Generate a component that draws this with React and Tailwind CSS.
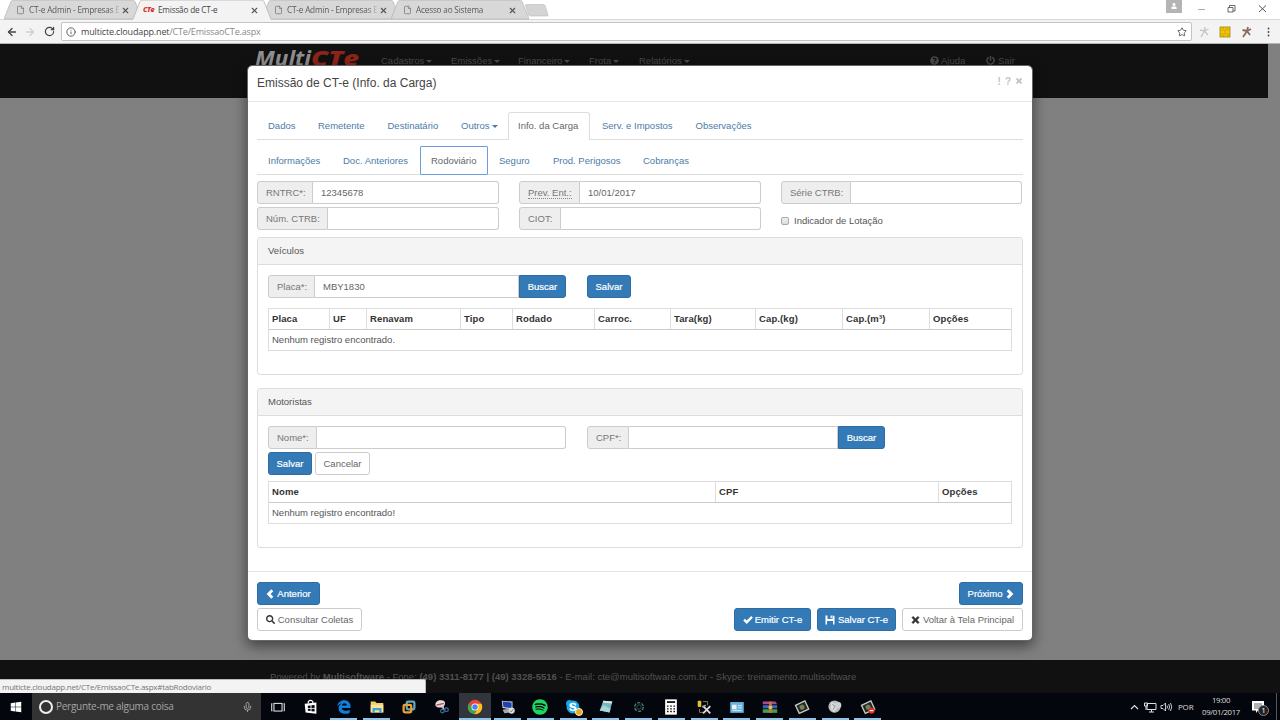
import React from "react";
import {
  FaPowerOff,
  FaQuestionCircle,
  FaSearch,
  FaSkype,
  FaSpotify,
  FaTimes,
  FaUser,
  FaWindows,
} from "react-icons/fa";
import { ArrowLeft, ArrowRight, RotateCw, Info, Star, Mic, X, File } from "lucide-react";

const browserTabs = [
  { title: "CT-e Admin - Empresas E", width: "w-[129px]" },
  { title: "Emissão de CT-e", width: "w-[129px]", active: true },
  { title: "CT-e Admin - Empresas E", width: "w-[129px]" },
  { title: "Acesso ao Sistema", width: "w-[130px]" },
];

const menus = [
  { label: "Cadastros", width: "w-[70px]" },
  { label: "Emissões", width: "w-[67px]" },
  { label: "Financeiro", width: "w-[71px]" },
  { label: "Frota", width: "w-[50px]" },
  { label: "Relatórios", width: "w-[70px]" },
];

const mainTabs = [
  { label: "Dados", width: "w-[50px]" },
  { label: "Remetente", width: "w-[69.500px]" },
  { label: "Destinatário", width: "w-[73.500px]" },
  { label: "Outros", width: "w-[58px]", caret: true },
  { label: "Info. da Carga", width: "w-[82px]", active: true },
  { label: "Serv. e Impostos", width: "w-[93.500px]" },
  { label: "Observações", width: "w-[80px]" },
];

const subTabs = [
  { label: "Informações", width: "w-[75px]" },
  { label: "Doc. Anteriores", width: "w-[88px]" },
  { label: "Rodoviário", width: "w-[68px]", focused: true },
  { label: "Seguro", width: "w-[54px]" },
  { label: "Prod. Perigosos", width: "w-[90px]" },
  { label: "Cobranças", width: "w-[70px]" },
];

const vehicleColumns = ["Placa", "UF", "Renavam", "Tipo", "Rodado", "Carroc.", "Tara(kg)", "Cap.(kg)", "Cap.(m³)", "Opções"];
const driverColumns = ["Nome", "CPF", "Opções"];

function Caret() {
  return (
    <span className="ml-[2px] inline-block h-0 w-0 border-x-[3px] border-t-[3px] border-x-transparent border-t-current align-middle" />
  );
}

function BrowserTab({ title, width, active }) {
  return (
    <div className={`relative h-[19px] ${width} ${active ? "z-10" : ""}`}>
      <svg className="absolute top-0 -left-1 h-[20px] w-[138px]" viewBox="0 0 138 20">
        <path d="M0 20 L7 1.5 Q8 0 10 0 H128 Q130 0 131 1.5 L138 20 Z" fill={active ? "#f3f3f3" : "#d8d8d8"} />
        <path
          d={active ? "M0 19 L7 1.5 Q8 0 10 0 H128 Q130 0 131 1.5 L138 19" : "M0 19 L7 1.5 Q8 0 10 0 H128 Q130 0 131 1.5 L138 19 H0"}
          fill="none"
          stroke="#b5b5b5"
          strokeWidth="0.8"
        />
      </svg>
      <div className="relative flex h-full items-center pt-px pl-[8px] text-[8.2px] tracking-[-0.18px] text-[#5a5a5a]">
        {active ? (
          <span className="-ml-[2px] w-[15px] text-[7px] font-extrabold tracking-[-0.4px] text-[#d8332a] italic">CTe</span>
        ) : (
          <span className="w-[13px]">
            <File className="h-[10px] w-[9px] text-[#777]" strokeWidth={2} />
          </span>
        )}
        <span className={`w-[92px] overflow-hidden whitespace-nowrap ${active ? "text-[#444]" : "[mask-image:linear-gradient(to_right,#000_80px,transparent_92px)]"}`}>
          {title}
        </span>
        <X className="h-[9px] w-[9px] shrink-0 text-[#555]" strokeWidth={3} />
      </div>
    </div>
  );
}

function BrowserChrome() {
  return (
    <header className="h-[44px] bg-white font-['Open_Sans','Noto_Sans',sans-serif]">
      <div className="flex h-[19px] pl-[8px]">
        {browserTabs.map((tab, i) => (
          <BrowserTab key={i} {...tab} />
        ))}
        <svg className="mt-[4px] h-[13px] w-[24px]" viewBox="0 0 24 13">
          <path d="M0.5 1.5 Q0 .5 1.5 .5 H18 Q19.500 .5 20 1.500 L23 11 Q23.500 12 22 12 H5 Q4 12 3.500 11 Z" fill="#d4d4d4" stroke="#bbb" strokeWidth="0.6" />
        </svg>
        <div className="ml-auto flex h-full text-[#444]">
          <span className="flex h-[13px] w-[16px] items-center justify-center bg-[#b4b4b4] text-white">
            <FaUser className="mb-[2px] h-[6px] w-[6px]" />
          </span>
          <svg className="mr-[-1px] ml-[15px] h-[18px] w-[84px]" viewBox="0 0 84 18" fill="none" stroke="currentColor">
            <path d="M1 9.500 H8" stroke="#aaa" />
            <path d="M31 7.500 H36 V12 H31 Z M32.500 7 V5.500 H38 V11 H36" strokeWidth="0.8" />
            <path d="M62 5.500 L69 12 M69 5.500 L62 12" strokeWidth="0.9" />
          </svg>
        </div>
      </div>
      <div className="flex h-[25px] items-center border-t border-b border-t-[#dadada] border-b-[#b5b5b5] bg-[#f3f3f3]">
        <ArrowLeft className="ml-[6px] h-[12px] w-[12px] text-[#444]" strokeWidth={2.6} />
        <ArrowRight className="ml-[6px] h-[12px] w-[12px] text-[#cfcfcf]" strokeWidth={2.6} />
        <RotateCw className="ml-[8px] h-[11px] w-[11px] text-[#444]" strokeWidth={2.6} />
        <div className="ml-[6px] flex h-[19px] w-[1131px] items-center rounded-xs border border-[#c4c4c4] bg-white px-[4px] text-[9px] tracking-[-0.16px] text-[#444]">
          <Info className="h-[10px] w-[10px] text-[#555]" strokeWidth={2.2} />
          <span className="ml-[5px]">
            multicte.cloudapp.net<span className="text-[#888]">/CTe/EmissaoCTe.aspx</span>
          </span>
          <Star className="ml-auto h-[10px] w-[10px] text-[#555]" strokeWidth={2.2} />
        </div>
        <svg className="ml-[7px] h-[12px] w-[76px]" viewBox="0 0 76 12">
          <path d="M6 1 L5.500 5 L9.500 3 M5.500 5 L9 9 M5.500 5 L2 11 M5.500 5 L1 4" fill="none" stroke="#c4c4c4" strokeWidth="1.300" />
          <rect x="21" y="1" width="10" height="10" fill="#f3c500" stroke="#9b8420" strokeWidth="0.8" />
          <path d="M21 4 H31 M21 8 H31 M24 1 V4 M28 1 V4 M26 4 V8 M24 8 V11 M29 8 V11" stroke="#c09d10" strokeWidth="0.6" />
          <path d="M49 1 L48 5 L52 3 M48 5 L51 9 M48 5 L44 11 M48 5 L43.500 4" fill="none" stroke="#8d6a5c" strokeWidth="1.800" />
          <circle cx="69.500" cy="2.500" r="0.9" fill="#444" />
          <circle cx="69.500" cy="6" r="0.9" fill="#444" />
          <circle cx="69.500" cy="9.500" r="0.9" fill="#444" />
        </svg>
      </div>
    </header>
  );
}

function Navbar() {
  return (
    <nav className="flex h-[54px] w-[1268px] bg-[#111] pl-[255px] text-[9.5px] text-[#4a4a4a]">
      <svg className="h-[30px] w-[108px]" viewBox="0 0 108 30" fontFamily="Open Sans" fontWeight="800" fontStyle="italic" fontSize="21">
        <text x="0" y="22" textLength="56" lengthAdjust="spacingAndGlyphs" fill="#8f8f8f" fontWeight="700">Multi</text>
        <text x="56" y="22" textLength="48" lengthAdjust="spacingAndGlyphs" fill="#8e2419">CTe</text>
      </svg>
      <div className="ml-[18px] flex pt-[10px]">
        {menus.map((menu) => (
          <span key={menu.label} className={menu.width}>
            {menu.label}
            <Caret />
          </span>
        ))}
      </div>
      <div className="ml-auto flex pt-[10px]">
        <span className="flex w-[56px] items-start">
          <FaQuestionCircle className="mt-[2px] mr-[2px] h-[9px] w-[9px]" />
          Ajuda
        </span>
        <span className="flex w-[282px] items-start">
          <FaPowerOff className="mt-[2px] mr-[3px] h-[9px] w-[9px]" />
          Sair
        </span>
      </div>
    </nav>
  );
}

function Field({ label, value, className = "", labelWidth, button, dotted }) {
  return (
    <div className={`flex h-[23px] ${className}`}>
      <span className={`flex shrink-0 items-center rounded-l-[3px] border border-[#ccc] bg-[#eee] pt-px pl-[8px] whitespace-nowrap text-[#777] ${labelWidth}`}>
        {dotted ? <span className="border-b border-dotted border-[#888] leading-[10px]">{label}</span> : label}
      </span>
      <span className={`flex flex-1 items-center border border-l-0 border-[#ccc] bg-white pt-px pl-[8px] text-[#666] ${button ? "" : "rounded-r-[3px]"}`}>
        {value}
      </span>
      {button && <Button className="w-[47px] rounded-l-none">{button}</Button>}
    </div>
  );
}

function Button({ children, className = "", plain }) {
  const colors = plain
    ? "border-[#ccc] bg-white text-[#666]"
    : "border-[#2e6da4] bg-[#337ab7] text-white [-webkit-text-stroke:0.2px_white]";
  return (
    <button className={`flex h-[23px] shrink-0 items-center justify-center rounded-[3px] border pt-px whitespace-nowrap ${colors} ${className}`}>
      {children}
    </button>
  );
}

function Panel({ title, className, children }) {
  return (
    <section className={`rounded-[3px] border border-[#ddd] ${className}`}>
      <h2 className="flex h-[27px] items-center rounded-t-[3px] border-b border-[#ddd] bg-[#f4f4f4] pt-px pl-[10px] text-[#555]">{title}</h2>
      <div className="px-[10px] pt-[10px]">{children}</div>
    </section>
  );
}

function DataTable({ columns, grid, empty, className }) {
  return (
    <div className={`h-[43px] border border-[#ddd] ${className}`}>
      <div className={`grid h-[21px] border-b border-[#ccc] ${grid}`}>
        {columns.map((column, i) => (
          <span key={column} className={`flex items-center pl-[3px] font-bold tracking-[0.12px] text-[#333] ${i ? "border-l border-[#ddd]" : ""}`}>
            {column}
          </span>
        ))}
      </div>
      <div className="flex h-[20px] items-center pl-[3px] text-[#555]">{empty}</div>
    </div>
  );
}

function Chevron({ flip }) {
  return (
    <svg className={`h-[10px] w-[8px] ${flip ? "-scale-x-100" : ""}`} viewBox="0 0 8 10" fill="currentColor">
      <path d="M5.300 0.300 L7.300 2.300 L4.600 5 L7.300 7.700 L5.300 9.700 L0.600 5 Z" />
    </svg>
  );
}

function CheckIcon() {
  return (
    <svg className="h-[10px] w-[10px]" viewBox="0 0 10 10" fill="currentColor">
      <path d="M0.200 5.500 L2 3.700 L3.700 5.400 L8.200 1 L9.900 2.700 L3.700 8.900 Z" />
    </svg>
  );
}

function FloppyIcon() {
  return (
    <svg className="mb-px h-[10px] w-[10px]" viewBox="0 0 10 10" fill="currentColor">
      <path fillRule="evenodd" d="M0.500 0.500 H2.500 V4 H7.500 V0.500 H8.500 L9.500 1.500 V9.500 H8 V6 H2 V9.500 H0.500 Z M5.500 0.500 H6.800 V3.200 H5.500 Z" />
    </svg>
  );
}

function CteModal() {
  return (
    <div className="absolute top-[65px] left-[247px] h-[576px] w-[786px] rounded-[5px] border border-[#666] bg-white bg-clip-padding shadow-[0_5px_14px_rgba(0,0,0,0.5)]">
      <div className="flex h-[36px] items-center border-b border-[#e5e5e5] px-[9px]">
        <h1 className="pb-[2px] text-[12px] text-[#444]">Emissão de CT-e (Info. da Carga)</h1>
        <span className="ml-auto flex items-center gap-[4px] pb-[5px] text-[10px] font-bold text-[#c4c4c4]">
          <span>!</span>
          <span>?</span>
          <FaTimes className="h-[8px] w-[8px]" strokeWidth={40} stroke="currentColor" />
        </span>
      </div>

      <div className="h-[469px] px-[9px] pt-[10px]">
        <ul className="flex h-[28px] border-b border-[#ddd]">
          {mainTabs.map((tab) => (
            <li
              key={tab.label}
              className={`flex h-[28px] items-center whitespace-nowrap ${tab.width} ${
                tab.active ? "mr-px rounded-t-[3px] border border-b-0 border-[#ddd] bg-white pl-[9px] text-[#666]" : "pl-[11px] text-[#4b7ba7]"
              }`}
            >
              {tab.label}
              {tab.caret && <Caret />}
            </li>
          ))}
        </ul>
        <ul className="mt-[6px] flex h-[29px] border-b border-[#ddd]">
          {subTabs.map((tab) => (
            <li
              key={tab.label}
              className={`flex h-[29px] items-center pt-px whitespace-nowrap ${tab.width} ${
                tab.focused ? "rounded-[1px] border border-[#6b9be0] bg-white pl-[10px] text-[#666]" : "pl-[11px] text-[#4b7ba7]"
              }`}
            >
              {tab.label}
            </li>
          ))}
        </ul>

        <div className="mt-[6px] grid grid-cols-[242px_242px_242px] gap-x-[20px] gap-y-[3px]">
          <Field label="RNTRC*:" value="12345678" labelWidth="w-[56px]" />
          <Field label="Prev. Ent.:" value="10/01/2017" labelWidth="w-[61px]" dotted />
          <Field label="Série CTRB:" labelWidth="w-[70px]" className="mr-px" />
          <Field label="Núm. CTRB:" labelWidth="w-[71px]" />
          <Field label="CIOT:" labelWidth="w-[42px]" />
          <label className="flex items-center pt-[5px] text-[#555]">
            <span className="mr-[5px] mb-px h-[8px] w-[8px] rounded-[2px] border border-[#aaa] bg-linear-to-b from-[#eee] to-[#ddd]" />
            Indicador de Lotação
          </label>
        </div>

        <Panel title="Veículos" className="mt-[7px] h-[138px]">
          <div className="flex">
            <Field label="Placa*:" value="MBY1830" labelWidth="w-[47px]" className="w-[298px]" button="Buscar" />
            <Button className="ml-[21px] w-[44px]">Salvar</Button>
          </div>
          <DataTable
            className="mt-[10px]"
            columns={vehicleColumns}
            grid="grid-cols-[60px_37px_94px_52px_82px_76px_85px_87px_87px_1fr]"
            empty="Nenhum registro encontrado."
          />
        </Panel>

        <Panel title="Motoristas" className="mt-[13px] h-[160px]">
          <div className="flex">
            <Field label="Nome*:" labelWidth="w-[49px]" className="w-[298px]" />
            <Field label="CPF*:" labelWidth="w-[42px]" className="ml-[21px] w-[298px]" button="Buscar" />
          </div>
          <div className="mt-[3px] flex">
            <Button className="w-[44px]">Salvar</Button>
            <Button plain className="ml-[3px] w-[55px]">Cancelar</Button>
          </div>
          <DataTable
            className="mt-[6px]"
            columns={driverColumns}
            grid="grid-cols-[446px_223px_1fr]"
            empty="Nenhum registro encontrado!"
          />
        </Panel>
      </div>

      <footer className="border-t border-[#e5e5e5] px-[9px] pt-[10px]">
        <div className="flex justify-between">
          <Button className="w-[63px] gap-[3px]">
            <Chevron />
            Anterior
          </Button>
          <Button className="w-[64px] gap-[4px]">
            Próximo
            <Chevron flip />
          </Button>
        </div>
        <div className="mt-[3px] flex">
          <Button plain className="w-[105px] gap-[3px]">
            <FaSearch className="mb-px h-[9px] w-[9px] text-[#333]" />
            Consultar Coletas
          </Button>
          <Button className="ml-auto w-[77px] gap-[2px]">
            <CheckIcon />
            Emitir CT-e
          </Button>
          <Button className="ml-[6px] w-[79px] gap-[3px]">
            <FloppyIcon />
            Salvar CT-e
          </Button>
          <Button plain className="ml-[6px] w-[121px] gap-[3px]">
            <FaTimes className="mb-px h-[10px] w-[9px] text-[#333]" strokeWidth={30} stroke="currentColor" />
            Voltar à Tela Principal
          </Button>
        </div>
      </footer>
    </div>
  );
}

// 20x20 drawings for the programs pinned to the taskbar
const glyphs = {
  taskview: (
    <g fill="none" stroke="#ddd" strokeWidth="1.200">
      <rect x="5.500" y="6" width="9" height="8.500" />
      <path d="M3.800 6.500 H3 V14 H3.800 M16.200 6.500 H17 V14 H16.200" />
    </g>
  ),
  store: (
    <g>
      <path d="M3 6.500 L16 5 V17.500 L4 16 Z" fill="#fff" />
      <path d="M7 6 V4 Q9.500 1.500 12 4 V6" fill="none" stroke="#fff" strokeWidth="1.300" />
      <path d="M6.500 8.500 L9.500 8.200 V11 H6.500 Z M10.500 8.100 L14 7.800 V11 H10.500 Z M6.500 12 H9.500 V14.500 L6.500 14.200 Z M10.500 12 H14 V15 L10.500 14.600 Z" fill="#090a12" />
    </g>
  ),
  edge: (
    <path
      d="M2.500 9.500 C3 5 6 2.500 10.200 2.500 C14.500 2.500 17.300 5.500 17.300 9.300 V11.200 H7.500 C7.700 13.300 9.500 14.300 11.700 14.300 C13.500 14.300 15 13.800 16.300 13 V16.300 C14.800 17.200 13 17.600 11 17.600 C6.800 17.600 4 15.200 4 11.500 C4 9.300 5.200 7.300 7.400 6.200 C5.300 6.500 3.500 7.800 2.500 9.500 Z M7.600 8.400 H13.200 C13.200 6.800 12.200 5.800 10.500 5.800 C8.900 5.800 7.900 6.900 7.600 8.400 Z"
      fill="#0d7fdb"
      fillRule="evenodd"
    />
  ),
  folder: (
    <g>
      <path d="M3 4 H8 L9.500 5.500 H17 V16 H3 Z" fill="#f2cf66" />
      <path d="M3 7.500 H17 V16 H3 Z" fill="#fae39a" />
      <path d="M5 11 H15 V16.500 H12.500 V13.500 H7.500 V16.500 H5 Z" fill="#3fa3d8" />
    </g>
  ),
  vmware: (
    <g fill="none" strokeWidth="2.500">
      <rect x="7.500" y="4" width="8.500" height="8.500" rx="1.500" stroke="#60a9c5" />
      <rect x="4" y="7.500" width="8.500" height="8.500" rx="1.500" stroke="#eda22e" />
    </g>
  ),
  snip: (
    <g>
      <ellipse cx="8" cy="6.500" rx="5.500" ry="4" fill="#e8dede" transform="rotate(-15 8 6.500)" />
      <path d="M4 8 L12 6" stroke="#c33f49" strokeWidth="1.500" />
      <path d="M7 8 L13 13 M12 7 L11 13" stroke="#ccc" strokeWidth="1.200" />
      <circle cx="10.500" cy="14.500" r="2" fill="none" stroke="#3e75a6" strokeWidth="1.300" />
      <circle cx="15" cy="13" r="2" fill="none" stroke="#3e75a6" strokeWidth="1.300" />
    </g>
  ),
  chrome: (
    <g>
      <circle cx="10" cy="10" r="8" fill="#e8453c" />
      <path d="M3.070 6 L7 12 L10.500 13.500 L9.500 18 A8 8 0 0 1 3.070 6 Z" fill="#34a853" />
      <path d="M10 6.500 H17.200 A8 8 0 0 1 9.500 18 L13 12 Z" fill="#fbc116" />
      <circle cx="10" cy="10" r="3.900" fill="#fff" />
      <circle cx="10" cy="10" r="3" fill="#4285f4" />
    </g>
  ),
  remote: (
    <g>
      <path d="M3 3 L15 4 V13 L4 11 Z" fill="#c7d4e4" />
      <path d="M4 4 L14 5 V11.500 L5 10 Z" fill="#1d43ad" />
      <path d="M4 13 L10 12 L13 16 L6 17 Z" fill="#a9a9a2" />
      <circle cx="14" cy="14" r="3.500" fill="#ddd" />
      <path d="M12.500 14 L13.500 15.500 L16 12.500" fill="none" stroke="#777" />
    </g>
  ),
  notepad: (
    <g>
      <path d="M7 3 L17 4 L14 16 L3 14 Z" fill="#76b7c2" />
      <path d="M7 3 L17 4 L16.500 6 L6.500 5 Z" fill="#dce8e8" />
      <path d="M3 14 L14 16 L15 12 L7 8 Z" fill="#a8d5d8" />
    </g>
  ),
  gear: (
    <g fill="none" stroke="#477d6b">
      <circle cx="10" cy="10" r="4.800" strokeWidth="1.500" strokeDasharray="3.500 1.500" />
      <circle cx="10" cy="10" r="2.500" stroke="#2d5148" />
    </g>
  ),
  calc: (
    <g>
      <rect x="3.500" y="1.500" width="13" height="17" fill="#fff" />
      <path d="M5.500 4.500 H14.500" stroke="#111" strokeWidth="2" />
      <path d="M5.500 9 H14.500 M5.500 12 H14.500 M5.500 15 H14.500" stroke="#111" strokeWidth="1.500" strokeDasharray="1.800 1.800" />
    </g>
  ),
  tools: (
    <g>
      <rect x="3" y="3" width="4" height="7" rx="1" fill="#e9bb32" />
      <path d="M9 4 H14 V8 M5 12 V16 H10" fill="none" stroke="#8d8b55" />
      <path d="M9 9 L17 17 M17 9 L9 17" stroke="#ddd" strokeWidth="2" />
      <path d="M8 10 L12 8" stroke="#aaa" strokeWidth="2" />
    </g>
  ),
  card: (
    <g>
      <rect x="2.500" y="4.500" width="15" height="12" fill="#69b4df" />
      <rect x="4.500" y="7.500" width="5" height="5" fill="#e5f3fb" />
      <path d="M11 8.500 H15.500 M11 11 H15.500 M5 14 H15" stroke="#dff1fc" />
    </g>
  ),
  winrar: (
    <g>
      <path d="M2 4 H16 L18 7 H2 Z" fill="#b1488f" />
      <path d="M2 8 H18 V11.500 H2 Z" fill="#3f62bb" />
      <path d="M2 12.500 H18 V16.500 H2 Z" fill="#4b9b49" />
      <path d="M9 4 H12 V16.500 H9 Z" fill="#bd7e3e" />
      <path d="M8.500 9 H12.500 V12 H8.500 Z" fill="#e1c471" />
    </g>
  ),
  photo: (
    <g transform="rotate(-25 10 10)">
      <rect x="3.500" y="4.500" width="13" height="11.500" fill="#c9cbc2" />
      <rect x="5" y="6" width="10" height="8.500" fill="#222820" />
      <circle cx="10" cy="10.200" r="2.800" fill="#73805d" />
    </g>
  ),
  globe: (
    <g>
      <circle cx="9.500" cy="9.500" r="6.800" fill="#b8b9bb" />
      <path d="M6 4 L14 9 L9 16 L5 12 Z" fill="#dadbdd" />
      <circle cx="13.500" cy="8" r="3.500" fill="#cfd0d2" />
      <path d="M7 7 L10 9 L8 13" fill="none" stroke="#8c8c8f" />
    </g>
  ),
};

glyphs.recorder = (
  <g>
    {glyphs.photo}
    <circle cx="14" cy="14" r="3.500" fill="#d7322c" />
    <path d="M12 14 H16" stroke="#fff" strokeWidth="1.300" />
  </g>
);

const pinned = [
  { name: "taskview" },
  { name: "store" },
  { name: "edge", open: true },
  { name: "folder", open: true },
  { name: "vmware" },
  { name: "snip" },
  { name: "chrome", open: true, current: true },
  { name: "remote", open: true },
  { name: "spotify", icon: <FaSpotify className="h-[16px] w-[16px] text-[#1ed760]" />, open: true },
  {
    name: "skype",
    icon: (
      <span className="relative">
        <svg className="h-[16px] w-[16px]" viewBox="0 0 16 16">
          <circle cx="8" cy="8" r="5.500" fill="#fff" />
          <FaSkype size={16} color="#13a9ec" />
        </svg>
        <span className="absolute right-[-2px] bottom-[-1px] h-[8px] w-[8px] rounded-full border border-[#fff0c0] bg-[#e9a52d]" />
      </span>
    ),
    open: true,
  },
  { name: "notepad", open: true },
  { name: "gear", open: true },
  { name: "calc", open: true },
  { name: "tools", open: true },
  { name: "card", open: true },
  { name: "winrar", open: true },
  { name: "photo", open: true },
  { name: "globe", open: true },
  { name: "recorder", open: true },
];

function Taskbar() {
  return (
    <div className="flex h-[27px] bg-[#04060e] font-['Open_Sans','Noto_Sans',sans-serif] text-white">
      <span className="flex w-[32px] items-center justify-center">
        <FaWindows className="h-[12px] w-[12px]" />
      </span>
      <div className="flex w-[229px] items-center bg-[#333] pl-[7px] text-[10px] tracking-[-0.27px] text-[#a5a5a5]">
        <span className="mr-[3px] h-[14px] w-[14px] rounded-full border-2 border-[#eee]" />
        Pergunte-me alguma coisa
        <Mic className="mr-[8px] ml-auto h-[12px] w-[11px]" strokeWidth={2} />
      </div>
      <div className="ml-px flex">
        {pinned.map((app) => (
          <span
            key={app.name}
            className={`flex w-[32.75px] flex-col items-center justify-between ${app.current ? "bg-[#33353c]" : ""}`}
          >
            <span className="flex h-[25px] items-center pt-[2px]">
              {app.icon || (
                <svg className="h-[18px] w-[18px]" viewBox="0 0 20 20">
                  {glyphs[app.name]}
                </svg>
              )}
            </span>
            {app.open && <span className={`h-[2px] bg-[#8fc3ea] ${app.current ? "w-full" : "w-[27px]"}`} />}
          </span>
        ))}
      </div>
      <div className="ml-auto flex items-center text-[8px] text-[#ddd]">
        <svg className="h-[14px] w-[43px]" viewBox="0 0 43 14" fill="none" stroke="#ddd">
          <path d="M1 9 L4.500 5.500 L8 9" strokeWidth="1.200" />
          <path d="M17 3.500 H26 V9.500 H17 Z M19 12 H24 M21.500 9.500 V12 M14.500 3 H17.500 V6 H14.500 Z M16 6 V10" />
          <path d="M31 5.500 H33 L35.500 3 V11 L33 8.500 H31 Z M37 5.500 Q38 7 37 8.500 M38.700 4 Q40.500 7 38.700 10 M40.500 3 Q43 7 40.500 11" strokeWidth="0.900" />
        </svg>
        <span className="ml-[5px] w-[23px] tracking-[-0.2px]">POR</span>
        <span className="w-[40px] pb-px text-center text-[7.8px] leading-[12px] tracking-[-0.35px] whitespace-nowrap">
          19:00
          <br />
          09/01/2017
        </span>
        <span className="relative ml-[11px] w-[24px]">
          <svg className="h-[12px] w-[12px]" viewBox="0 0 12 12">
            <path d="M0 0 H12 V9.500 H6 L4 12 V9.500 H0 Z" fill="#fff" />
            <path d="M2 3 H10 M2 5 H10 M2 7 H8" stroke="#222" strokeWidth="0.7" />
          </svg>
          <span className="absolute top-[4px] left-[6px] flex h-[11px] w-[11px] items-center justify-center rounded-full border border-[#888] bg-[#222] text-[8px] text-white">
            1
          </span>
        </span>
        <span className="mr-[3px] h-full w-px bg-[#555]" />
      </div>
    </div>
  );
}

const App = () => {
  return (
    <div className="relative flex h-[720px] w-[1280px] flex-col overflow-hidden bg-[#808080] font-['Liberation_Sans',Arial,sans-serif] text-[9.5px]">
      <BrowserChrome />
      <Navbar />
      <main className="h-[562px]" />
      <footer className="h-[33px] bg-[#111] pt-[10px] pl-[270px] text-[#505050]">
        Powered by <b>Multisoftware</b> - Fone: <b>(49) 3311-8177 | (49) 3328-5516</b> - E-mail: cte@multisoftware.com.br - Skype:
        treinamento.multisoftware
      </footer>
      <Taskbar />

      {/* link target shown by the browser while hovering a tab */}
      <div className="absolute top-[679px] left-0 flex h-[14px] w-[426px] items-center rounded-tr-[2px] border-t border-r border-[#bbb] bg-[#f3f3f3] pt-px pl-[2px] font-['Open_Sans','Noto_Sans',sans-serif] text-[8px] tracking-[-0.25px] text-[#777]">
        multicte.cloudapp.net/CTe/EmissaoCTe.aspx#tabRodoviario
      </div>
      <CteModal />
    </div>
  );
};

export default App;
